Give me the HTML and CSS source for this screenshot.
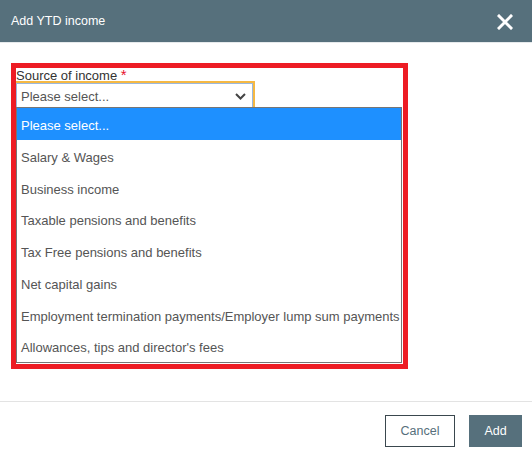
FILE: index.html
```html
<!DOCTYPE html>
<html lang="en">
<head>
<meta charset="utf-8">
<title>Add YTD income</title>
<link rel="stylesheet" href="styles.css">
</head>
<body>
<div class="modal">
  <header class="modal-header">
    <h1 class="modal-title">Add YTD income</h1>
    <button class="close-btn" aria-label="Close">
      <svg width="16" height="16" viewBox="0 0 16 16"><path d="M2 2 L14 14 M14 2 L2 14" stroke="#fff" stroke-width="3" stroke-linecap="square" fill="none"/></svg>
    </button>
  </header>
  <main class="modal-body">
    <div class="highlight">
      <div class="field-label">Source of income <span class="req">*</span></div>
      <div class="select-focus">
        <div class="select">
          <span class="select-text">Please select...</span>
          <svg class="chevron" width="11" height="7" viewBox="0 0 11 7"><path d="M1 1 L5.5 5.5 L10 1" stroke="#444" stroke-width="2" fill="none"/></svg>
        </div>
      </div>
      <ul class="options">
        <li class="option active">Please select...</li>
        <li class="option">Salary &amp; Wages</li>
        <li class="option">Business income</li>
        <li class="option">Taxable pensions and benefits</li>
        <li class="option">Tax Free pensions and benefits</li>
        <li class="option">Net capital gains</li>
        <li class="option">Employment termination payments/Employer lump sum payments</li>
        <li class="option">Allowances, tips and director's fees</li>
      </ul>
    </div>
  </main>
  <footer class="modal-footer">
    <button class="btn btn-cancel">Cancel</button>
    <button class="btn btn-add">Add</button>
  </footer>
</div>
</body>
</html>
```

FILE: styles.css
```css
* { box-sizing: border-box; }
html, body {
  margin: 0;
  padding: 0;
  background: #fff;
  font-family: "Liberation Sans", Arial, sans-serif;
}
.modal {
  width: 532px;
  height: 459px;
  display: flex;
  flex-direction: column;
}
.modal-header {
  height: 43px;
  background: #56707c;
  border-bottom: 1px solid #e6eaec;
  display: flex;
  align-items: center;
  justify-content: space-between;
  padding: 0 19px 0 11px;
}
.modal-title {
  margin: 0;
  font-size: 12.5px;
  font-weight: normal;
  color: #fff;
  line-height: 14px;
  padding-bottom: 1px;
}
.close-btn {
  border: 0;
  background: transparent;
  padding: 0;
  margin: 0;
  width: 16px;
  height: 16px;
  display: flex;
  margin-top: 2px;
}
.modal-body {
  padding: 20px 0 0 11px;
  height: 358px;
}
.highlight {
  width: 397px;
  height: 306px;
  border: 5px solid #ed1c24;
  display: flex;
  flex-direction: column;
}
.field-label {
  font-size: 13px;
  line-height: 13px;
  height: 13px;
  color: #333;
}
.req {
  color: #e8112d;
  font-size: 15px;
}
.select-focus {
  width: 239px;
  height: 26px;
  border-top: 2px solid #f5b843;
  border-right: 2px solid #f5b843;
}
.select {
  height: 24px;
  border: 1px solid #9bb8dc;
  border-bottom: 0;
  display: flex;
  align-items: center;
  justify-content: space-between;
  padding: 1px 6px 0 4px;
}
.select-text {
  font-size: 13px;
  color: #555;
}
.chevron { display: block; margin-top: 1px; }
.options {
  list-style: none;
  margin: 0;
  padding: 0;
  width: 386px;
  border: 1px solid #767676;
}
.option {
  height: 31.75px;
  line-height: 31px;
  padding: 2px 0 0 4px;
  font-size: 13px;
  color: #555;
  white-space: nowrap;
  overflow: hidden;
}
.option.active {
  background: #1e90ff;
  color: #fff;
}
.modal-footer {
  border-top: 1px solid #e3e3e3;
  flex: 1;
  display: flex;
  justify-content: flex-end;
  align-items: flex-start;
  gap: 14px;
  padding: 13px 10px 0 0;
}
.btn {
  height: 32px;
  font-family: "Liberation Sans", Arial, sans-serif;
  font-size: 12.5px;
  padding: 0;
  margin: 0;
  cursor: pointer;
}
.btn-cancel {
  width: 70px;
  background: #fff;
  border: 1px solid #3a474e;
  color: #566f7b;
}
.btn-add {
  width: 53px;
  background: #56707c;
  border: 0;
  color: #fff;
}
```
